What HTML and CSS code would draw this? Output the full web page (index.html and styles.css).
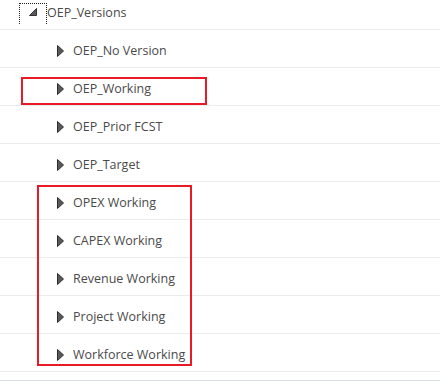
FILE: index.html
```html
<!DOCTYPE html>
<html lang="en">

<head>
    <meta charset="UTF-8">
    <meta name="viewport" content="width=device-width, initial-scale=1.0">
    <title>Member Tree</title>
    <link rel="stylesheet" href="styles.css">
</head>

<body>
    <div class="tree">
        <div class="row root">
            <span class="focus"></span>
            <svg class="expanded" width="8" height="8" viewBox="0 0 8 8">
                <polygon points="7.5,0.5 7.5,7.5 0.5,7.5" fill="#595959" stroke="#333" stroke-width="1" />
            </svg>
            <span class="label">OEP_Versions</span>
        </div>

        <div class="row child">
            <svg class="collapsed" width="7" height="12" viewBox="0 0 7 12">
                <polygon points="0.5,0.5 6.5,6 0.5,11.5" fill="#5a5a5a" stroke="#2f2f2f" stroke-width="1" />
            </svg>
            <span class="label">OEP_No Version</span>
        </div>
        <div class="row child">
            <svg class="collapsed" width="7" height="12" viewBox="0 0 7 12">
                <polygon points="0.5,0.5 6.5,6 0.5,11.5" fill="#5a5a5a" stroke="#2f2f2f" stroke-width="1" />
            </svg>
            <span class="label">OEP_Working</span>
        </div>
        <div class="row child">
            <svg class="collapsed" width="7" height="12" viewBox="0 0 7 12">
                <polygon points="0.5,0.5 6.5,6 0.5,11.5" fill="#5a5a5a" stroke="#2f2f2f" stroke-width="1" />
            </svg>
            <span class="label">OEP_Prior FCST</span>
        </div>
        <div class="row child">
            <svg class="collapsed" width="7" height="12" viewBox="0 0 7 12">
                <polygon points="0.5,0.5 6.5,6 0.5,11.5" fill="#5a5a5a" stroke="#2f2f2f" stroke-width="1" />
            </svg>
            <span class="label">OEP_Target</span>
        </div>
        <div class="row child">
            <svg class="collapsed" width="7" height="12" viewBox="0 0 7 12">
                <polygon points="0.5,0.5 6.5,6 0.5,11.5" fill="#5a5a5a" stroke="#2f2f2f" stroke-width="1" />
            </svg>
            <span class="label">OPEX Working</span>
        </div>
        <div class="row child">
            <svg class="collapsed" width="7" height="12" viewBox="0 0 7 12">
                <polygon points="0.5,0.5 6.5,6 0.5,11.5" fill="#5a5a5a" stroke="#2f2f2f" stroke-width="1" />
            </svg>
            <span class="label">CAPEX Working</span>
        </div>
        <div class="row child">
            <svg class="collapsed" width="7" height="12" viewBox="0 0 7 12">
                <polygon points="0.5,0.5 6.5,6 0.5,11.5" fill="#5a5a5a" stroke="#2f2f2f" stroke-width="1" />
            </svg>
            <span class="label">Revenue Working</span>
        </div>
        <div class="row child">
            <svg class="collapsed" width="7" height="12" viewBox="0 0 7 12">
                <polygon points="0.5,0.5 6.5,6 0.5,11.5" fill="#5a5a5a" stroke="#2f2f2f" stroke-width="1" />
            </svg>
            <span class="label">Project Working</span>
        </div>
        <div class="row child">
            <svg class="collapsed" width="7" height="12" viewBox="0 0 7 12">
                <polygon points="0.5,0.5 6.5,6 0.5,11.5" fill="#5a5a5a" stroke="#2f2f2f" stroke-width="1" />
            </svg>
            <span class="label">Workforce Working</span>
        </div>
        <div class="row-tail"></div>

        <!-- red highlight annotations -->
        <div class="mark mark-single"></div>
        <div class="mark mark-group"></div>
    </div>
</body>

</html>
```

FILE: styles.css
```css
body {
    margin: 0;
    padding: 0;
    background: #fff;
    font-family: 'Open Sans', 'Noto Sans', sans-serif;
    font-size: 12.5px;
    color: #4a4a4a;
    overflow: hidden;
}

.tree {
    position: relative;
    margin-top: -8px;
}

.row {
    display: flex;
    align-items: center;
    height: 37px;
    border-bottom: 1px solid #ebebeb;
    box-sizing: content-box;
}

.root {
    position: relative;
    padding-left: 29px;
}

.root .expanded {
    margin-top: 3px;
    margin-right: 10px;
}

.focus {
    position: absolute;
    left: 19px;
    top: 11px;
    width: 26px;
    height: 20px;
    border: 1px dotted #222;
    border-bottom: none;
}

.child {
    padding-left: 57px;
}

.child .collapsed {
    margin-right: 9px;
    margin-top: 5px;
}

.label {
    line-height: 1;
    padding-top: 6px;
}

.row-tail {
    height: 8px;
    border-bottom: 1px solid #d8dee3;
}

.mark {
    position: absolute;
    border: 2px solid #e81a25;
    box-sizing: border-box;
}

.mark-single {
    left: 21px;
    top: 85px;
    width: 186px;
    height: 28px;
}

.mark-group {
    left: 37px;
    top: 193px;
    width: 155px;
    height: 181px;
}
```
